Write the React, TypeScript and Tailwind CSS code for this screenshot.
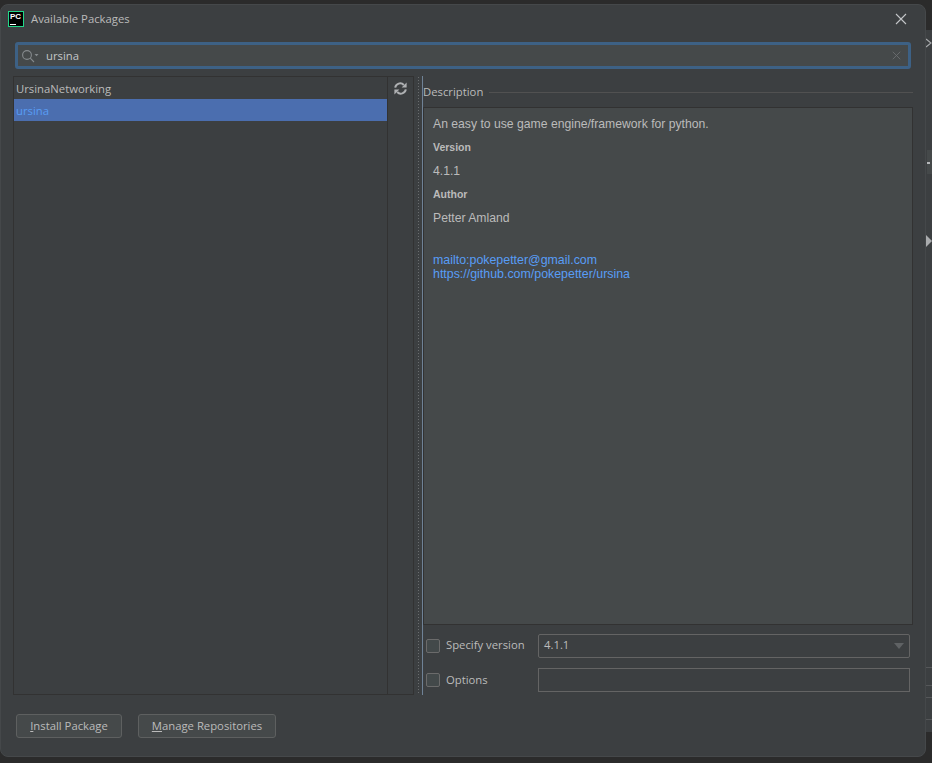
import React from 'react'

const ui = "font-['Open_Sans','Noto_Sans',sans-serif]"
const html = "font-['Liberation_Sans',Arial,sans-serif]"

const PcLogo = () => (
  <div className="w-4 h-4 bg-[#21d789] p-px shrink-0">
    <div className="w-full h-full bg-black relative">
      <span className={`absolute left-[1px] top-[0px] text-[8px] leading-[9px] font-bold text-white ${html}`}>PC</span>
      <div className="absolute left-[1px] bottom-[1px] w-[6px] h-px bg-white" />
    </div>
  </div>
)

const Close = ({ size, color }: { size: number; color: string }) => (
  <svg width={size} height={size} viewBox="0 0 12 12" fill="none" stroke={color} strokeWidth="1.1">
    <path d="M1 1l10 10M11 1L1 11" />
  </svg>
)

const Checkbox = () => <div className="w-[14px] h-[14px] rounded-[2px] border border-[#6b6b6b] bg-[#43494a] shrink-0" />

const Dots = () => (
  <div className="w-[3px] ml-[3px] mr-[2px] self-stretch bg-[radial-gradient(circle,#6a6d6f_1px,transparent_1px)] bg-[length:3px_3px]" />
)

// bits of the main IDE window that peek out behind the dialog
const Behind = () => (
  <div className="absolute right-0 top-[30px] w-[6px] h-[702px] bg-[#3c3f41]">
    <svg className="absolute left-0 top-[8px]" width="6" height="10" viewBox="0 0 6 10" fill="none" stroke="#a9abad" strokeWidth="1.1">
      <path d="M0 1l5 4-5 4" />
    </svg>
    <div className="absolute left-[1px] top-[120px] w-[5px] h-[24px] bg-[#45494a]" />
    <div className="absolute left-[1px] top-[132px] w-[3px] h-[2px] bg-[#b5b7b9]" />
    <svg className="absolute left-0 top-[205px]" width="6" height="12" viewBox="0 0 6 12"><path d="M0 0l6 6-6 6z" fill="#a9abad" /></svg>
    <div className="absolute left-0 top-[637px] w-full h-px bg-[#555759]" />
    <div className="absolute left-0 top-[655px] w-full h-px bg-[#555759]" />
    <div className="absolute left-0 top-[667px] w-full h-px bg-[#555759]" />
    <div className="absolute left-0 top-[689px] w-full h-px bg-[#555759]" />
  </div>
)

export default function App() {
  return (
    <div className={`relative w-[932px] h-[763px] bg-[#2b2b2b] overflow-hidden pt-1 ${ui}`}>
      <Behind />
      <div className="relative w-[926px] h-[753px] bg-[#3c3f41] rounded-[8px] border border-[#45484a] flex flex-col text-[#bbbbbb]">
        <div className="h-[28px] flex items-center pl-[7px] pr-[18px] shrink-0">
          <PcLogo />
          <span className="ml-[7px] text-[11.3px]">Available Packages</span>
          <div className="ml-auto"><Close size={12} color="#c4c6c8" /></div>
        </div>

        <div className="mx-[14px] mt-[9px] h-[27px] rounded-[3px] border-[3px] border-[#3d6185] bg-[#45494a] flex items-center pl-[3px] pr-[7px] shrink-0">
          <svg width="18" height="14" viewBox="0 0 18 14" fill="none" stroke="#858a8d" strokeWidth="1.1">
            <circle cx="6" cy="6" r="4.4" />
            <path d="M9.2 9.2L13 13" />
            <path d="M13.5 5h4l-2 2.2z" fill="#858a8d" stroke="none" />
          </svg>
          <span className="ml-[7px] pt-px text-[11.3px] text-[#c4c6c8]">ursina</span>
          <div className="ml-auto"><Close size={9} color="#6d7072" /></div>
        </div>

        <div className="flex mt-[7px] ml-[12px] mr-[12px] h-[619px] shrink-0">
          <div className="w-[375px] border border-[#323232] flex flex-col">
            <div className="h-[22px] flex items-center pl-[2px] pt-[2px] text-[11.3px] text-[#bbbbbb]">UrsinaNetworking</div>
            <div className="h-[22px] flex items-center pl-[2px] pt-[2px] text-[11.3px] text-[#589df6] bg-[#4b6eaf]">ursina</div>
          </div>
          <div className="w-[26px] border-y border-r border-[#323232] flex justify-center pt-[5px] pr-px">
            <svg width="13" height="13" viewBox="0 0 13 13" fill="none" stroke="#afb1b3" strokeWidth="2">
              <path d="M1.2 5.6A5 5 0 0 1 9.8 3" />
              <path d="M12.6 0.6v5h-5z" fill="#afb1b3" stroke="none" />
              <path d="M11.8 7.4A5 5 0 0 1 3.2 10" />
              <path d="M0.4 12.4v-5h5z" fill="#afb1b3" stroke="none" />
            </svg>
          </div>
          <Dots />
          <div className="w-px bg-[#6f8296]" />
          <div className="flex-1 min-w-0 flex flex-col pb-px">
            <div className="h-[31px] flex items-center gap-[6px] shrink-0 pt-[1px]">
              <span className="text-[11.3px]">Description</span>
              <div className="flex-1 h-px bg-[#515151]" />
            </div>
            <div className={`w-[490px] h-[518px] bg-[#45494a] border border-[#323232] pl-[9px] pt-[9px] text-[12.2px] shrink-0 ${html}`}>
              <p className="leading-[14px]">An easy to use game engine/framework for python.</p>
              <p className="mt-[10px] text-[10.5px] font-bold leading-[12px]">Version</p>
              <p className="mt-[11px] leading-[14px]">4.1.1</p>
              <p className="mt-[10px] text-[10.5px] font-bold leading-[12px]">Author</p>
              <p className="mt-[11px] leading-[14px]">Petter Amland</p>
              <p className="mt-[28px] leading-[14px] text-[12.4px] text-[#589df6]">mailto:pokepetter@gmail.com</p>
              <p className="leading-[14px] text-[12.4px] text-[#589df6]">https://github.com/pokepetter/ursina</p>
            </div>
            <div className="flex items-center mt-[8px] pl-[3px] h-[25px] shrink-0">
              <Checkbox />
              <span className="ml-[6px] w-[92px] text-[11.3px]">Specify version</span>
              <div className="w-[372px] h-[24px] rounded-[2px] border border-[#646464] bg-[#3c3f41] flex items-center pl-[5px] pr-[5px] text-[11.3px]">
                4.1.1
                <svg className="ml-auto" width="10" height="6" viewBox="0 0 10 6"><path d="M0 0h10L5 6z" fill="#5f6264" /></svg>
              </div>
            </div>
            <div className="flex items-center mt-[10px] pl-[3px] h-[24px] shrink-0">
              <Checkbox />
              <span className="ml-[6px] w-[92px] text-[11.3px]">Options</span>
              <div className="w-[372px] h-[24px] border border-[#646464] bg-[#3c3f41]" />
            </div>
          </div>
        </div>

        <div className="flex items-center gap-[16px] ml-[15px] mt-[19px]">
          <button className="w-[106px] h-[24px] rounded-[3px] border border-[#5e6060] bg-[#45494a] text-[11.3px] text-[#bbbbbb]"><u>I</u>nstall Package</button>
          <button className="w-[138px] h-[24px] rounded-[3px] border border-[#5e6060] bg-[#45494a] text-[11.3px] text-[#bbbbbb]"><u>M</u>anage Repositories</button>
        </div>
      </div>
    </div>
  )
}
